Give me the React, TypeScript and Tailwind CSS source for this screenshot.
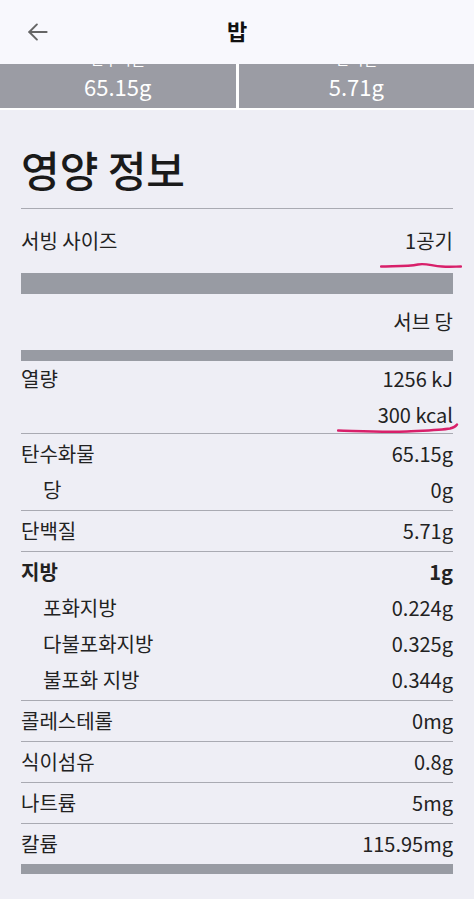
import React from 'react';

type Row = { label: string; value: string; sub?: boolean; bold?: boolean };

const sections: Row[][] = [
  [
    { label: '탄수화물', value: '65.15g' },
    { label: '당', value: '0g', sub: true },
  ],
  [{ label: '단백질', value: '5.71g' }],
  [
    { label: '지방', value: '1g', bold: true },
    { label: '포화지방', value: '0.224g', sub: true },
    { label: '다불포화지방', value: '0.325g', sub: true },
    { label: '불포화 지방', value: '0.344g', sub: true },
  ],
  [{ label: '콜레스테롤', value: '0mg' }],
  [{ label: '식이섬유', value: '0.8g' }],
  [{ label: '나트륨', value: '5mg' }],
  [{ label: '칼륨', value: '115.95mg' }],
];

function NutrientRow({ row }: { row: Row }) {
  return (
    <div className="flex h-9 items-center justify-between">
      <span className={`${row.sub ? 'pl-[22px]' : ''} ${row.bold ? 'font-bold' : ''}`}>{row.label}</span>
      <span className={row.bold ? 'font-bold' : ''}>{row.value}</span>
    </div>
  );
}

export default function App() {
  return (
    <div
      className="min-h-screen w-full bg-[#eeeef5] text-[#222]"
      style={{ fontFamily: '"Noto Sans CJK KR", "Noto Sans", sans-serif' }}
    >
      {/* 상단 바 */}
      <header className="flex h-16 items-center bg-[#f8f8fd] px-[22px]">
        <button className="flex h-8 w-8 items-center justify-center text-[#666]">
          <svg width="26" height="26" viewBox="0 0 24 24" fill="none" stroke="currentColor" strokeWidth="1.8" strokeLinecap="round" strokeLinejoin="round">
            <path d="M20 12H4" />
            <path d="M11 5l-7 7 7 7" />
          </svg>
        </button>
        <h1 className="flex-1 pb-[4px] text-center text-[22px] font-bold text-[#111]">밥</h1>
        <div className="w-8" />
      </header>

      {/* 요약 띠 (위쪽 라벨은 스크롤로 잘려 보임) */}
      <div className="flex h-[46px] gap-[3px] bg-white pb-[2px]">
        <div className="flex flex-1 flex-col items-center justify-end overflow-hidden bg-[#9b9ca4] pb-[8px] text-white">
          <span className="mb-[3px] text-[15px] leading-[20px]">탄수화물</span>
          <span className="text-[22px] leading-[28px]">65.15g</span>
        </div>
        <div className="flex flex-1 flex-col items-center justify-end overflow-hidden bg-[#9b9ca4] pb-[8px] text-white">
          <span className="mb-[3px] text-[15px] leading-[20px]">단백질</span>
          <span className="text-[22px] leading-[28px]">5.71g</span>
        </div>
      </div>

      <main className="px-[21px] pb-6 text-[20px]">
        <h2 className="mt-[34px] text-[42px] leading-[50px] font-medium text-[#1a1a1a]">영양 정보</h2>
        <div className="mt-[14px] h-px bg-[#a9aab2]" />

        <div className="relative flex h-[64px] items-center justify-between">
          <span>서빙 사이즈</span>
          <span>1공기</span>
          <svg className="absolute right-[-9px] top-[53px]" width="82" height="8" viewBox="0 0 82 8" fill="none">
            <path d="M1 4.5 C 15 4, 28 4.5, 38 2.5 C 46 1, 52 4, 62 4.5 C 70 5, 76 4.5, 81 4.5" stroke="#d8206a" strokeWidth="2.4" strokeLinecap="round" />
          </svg>
        </div>
        <div className="h-[21px] bg-[#989ba3]" />

        <div className="flex h-[56px] items-center justify-end">서브 당</div>
        <div className="h-[11px] bg-[#989ba3]" />

        <div>
          <div className="flex h-9 items-center justify-between">
            <span>열량</span>
            <span>1256 kJ</span>
          </div>
          <div className="relative flex h-9 items-center justify-end">
            <span>300 kcal</span>
            <svg className="absolute right-[-6px] top-[26px]" width="122" height="12" viewBox="0 0 122 12" fill="none">
              <path d="M1 7.5 C 20 8, 45 9.5, 70 8.5 C 90 7.5, 105 7, 113 5.5 C 117 4.5, 119 3, 120 1.5" stroke="#d8206a" strokeWidth="2.4" strokeLinecap="round" />
            </svg>
          </div>
        </div>

        {sections.map((rows, i) => (
          <div key={i}>
            <div className="h-px bg-[#a9aab2]" />
            <div className="py-[2px]">
              {rows.map((r) => (
                <NutrientRow key={r.label} row={r} />
              ))}
            </div>
          </div>
        ))}
        <div className="h-[10px] bg-[#989ba3]" />
      </main>
    </div>
  );
}
